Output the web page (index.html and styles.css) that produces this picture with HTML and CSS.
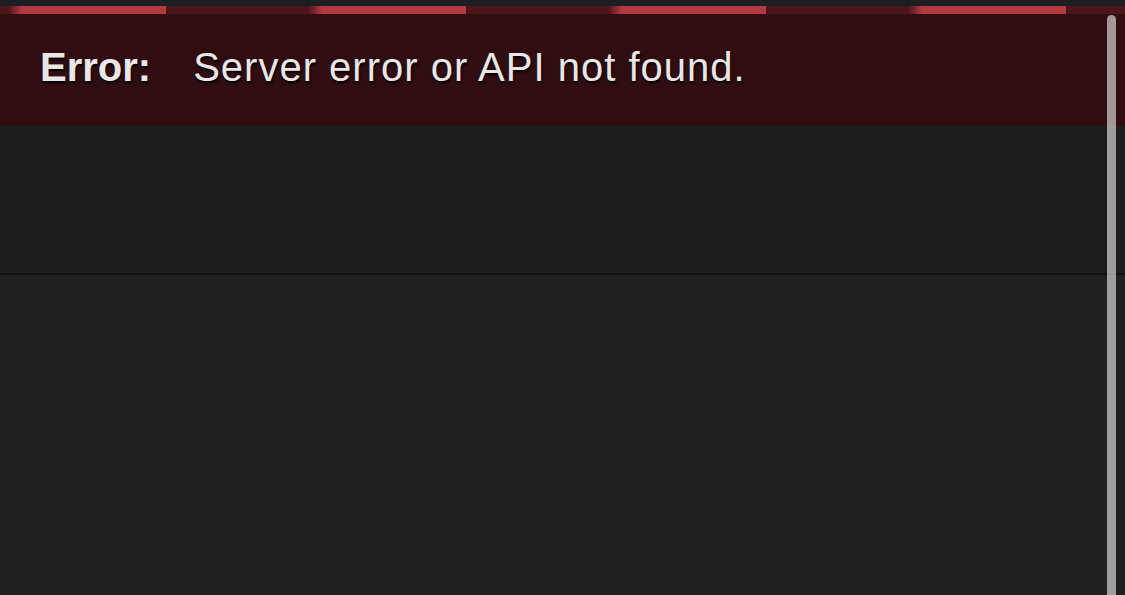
FILE: index.html
```html
<!DOCTYPE html>
<html lang="en">
<head>
<meta charset="utf-8">
<title>Error</title>
<link rel="stylesheet" href="styles.css">
</head>
<body>
<div class="app">
  <div class="topstrip"></div>
  <div class="progress"></div>
  <div class="banner">
    <span class="label">Error:</span>
    <span class="message">Server error or API not found.</span>
  </div>
  <div class="toolbar"></div>
  <div class="content"></div>
  <div class="scrollbar"></div>
</div>
</body>
</html>
```
FILE: styles.css
```css
html, body {
  margin: 0;
  padding: 0;
  height: 100%;
  background: #202020;
  overflow: hidden;
}

.app {
  position: relative;
  display: flex;
  flex-direction: column;
  height: 595px;
  font-family: "Liberation Sans", Arial, Helvetica, sans-serif;
}

.topstrip {
  height: 6px;
  background: #1c1f21;
}

.progress {
  height: 8px;
  background-color: #4b151b;
  background-image: linear-gradient(90deg,
    rgba(178, 58, 64, 0) 0px,
    rgba(178, 58, 64, 0) 8px,
    rgba(178, 58, 64, 1) 22px,
    rgba(178, 58, 64, 1) 166px,
    rgba(178, 58, 64, 0) 166px,
    rgba(178, 58, 64, 0) 300px);
  background-size: 300px 100%;
  background-repeat: repeat-x;
}

.banner {
  height: 112px;
  background: #2f0d10;
  display: flex;
  align-items: center;
  padding-left: 40px;
  padding-bottom: 6px;
  box-sizing: border-box;
  color: #ebe6e6;
  font-size: 40px;
  text-shadow: 1px 2px 2px rgba(0, 0, 0, 0.95);
}

.label {
  font-weight: bold;
  margin-right: 42px;
}

.message {
  font-weight: normal;
  letter-spacing: 1px;
}

.toolbar {
  height: 147px;
  background: #1d1d1d;
  border-bottom: 2px solid #121212;
}

.content {
  flex: 1;
  background: #202020;
}

.scrollbar {
  position: absolute;
  left: 1107px;
  top: 15px;
  width: 9px;
  bottom: 0;
  border-radius: 5px 5px 0 0;
  background: rgba(255, 255, 255, 0.57);
}
```
